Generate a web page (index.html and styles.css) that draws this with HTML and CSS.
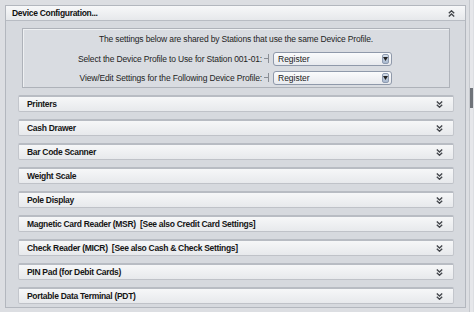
FILE: index.html
```html
<!DOCTYPE html>
<html>
<head>
<meta charset="utf-8">
<link rel="stylesheet" href="styles.css">
</head>
<body>
<div class="page">
  <div class="panel">
    <div class="panel-head">
      <span class="head-title">Device Configuration...</span>
      <svg class="chev" width="7" height="7" viewBox="0 0 7 7"><polyline points="0.8,3.3 3.5,0.8 6.2,3.3" /><polyline points="0.8,6.5 3.5,4 6.2,6.5" /></svg>
    </div>
    <div class="panel-body">
      <div class="info">
        <div class="info-line">The settings below are shared by Stations that use the same Device Profile.</div>
        <div class="info-row">
          <span class="lbl">Select the Device Profile to Use for Station 001-01:</span>
          <span class="tick"></span>
          <div class="select"><span>Register</span><span class="arrow"><svg width="5" height="4" viewBox="0 0 5 4"><polygon points="0,0 5,0 2.5,4" /></svg></span></div>
        </div>
        <div class="info-row">
          <span class="lbl">View/Edit Settings for the Following Device Profile:</span>
          <span class="tick"></span>
          <div class="select"><span>Register</span><span class="arrow"><svg width="5" height="4" viewBox="0 0 5 4"><polygon points="0,0 5,0 2.5,4" /></svg></span></div>
        </div>
      </div>
      <div class="sec"><span>Printers</span><svg class="chev" width="7" height="7" viewBox="0 0 7 7"><polyline points="0.8,0.5 3.5,3 6.2,0.5" /><polyline points="0.8,3.7 3.5,6.2 6.2,3.7" /></svg></div>
      <div class="sec"><span>Cash Drawer</span><svg class="chev" width="7" height="7" viewBox="0 0 7 7"><polyline points="0.8,0.5 3.5,3 6.2,0.5" /><polyline points="0.8,3.7 3.5,6.2 6.2,3.7" /></svg></div>
      <div class="sec"><span>Bar Code Scanner</span><svg class="chev" width="7" height="7" viewBox="0 0 7 7"><polyline points="0.8,0.5 3.5,3 6.2,0.5" /><polyline points="0.8,3.7 3.5,6.2 6.2,3.7" /></svg></div>
      <div class="sec"><span>Weight Scale</span><svg class="chev" width="7" height="7" viewBox="0 0 7 7"><polyline points="0.8,0.5 3.5,3 6.2,0.5" /><polyline points="0.8,3.7 3.5,6.2 6.2,3.7" /></svg></div>
      <div class="sec"><span>Pole Display</span><svg class="chev" width="7" height="7" viewBox="0 0 7 7"><polyline points="0.8,0.5 3.5,3 6.2,0.5" /><polyline points="0.8,3.7 3.5,6.2 6.2,3.7" /></svg></div>
      <div class="sec"><span>Magnetic Card Reader (MSR)&nbsp; [See also Credit Card Settings]</span><svg class="chev" width="7" height="7" viewBox="0 0 7 7"><polyline points="0.8,0.5 3.5,3 6.2,0.5" /><polyline points="0.8,3.7 3.5,6.2 6.2,3.7" /></svg></div>
      <div class="sec"><span>Check Reader (MICR)&nbsp; [See also Cash &amp; Check Settings]</span><svg class="chev" width="7" height="7" viewBox="0 0 7 7"><polyline points="0.8,0.5 3.5,3 6.2,0.5" /><polyline points="0.8,3.7 3.5,6.2 6.2,3.7" /></svg></div>
      <div class="sec"><span>PIN Pad (for Debit Cards)</span><svg class="chev" width="7" height="7" viewBox="0 0 7 7"><polyline points="0.8,0.5 3.5,3 6.2,0.5" /><polyline points="0.8,3.7 3.5,6.2 6.2,3.7" /></svg></div>
      <div class="sec"><span>Portable Data Terminal (PDT)</span><svg class="chev" width="7" height="7" viewBox="0 0 7 7"><polyline points="0.8,0.5 3.5,3 6.2,0.5" /><polyline points="0.8,3.7 3.5,6.2 6.2,3.7" /></svg></div>
    </div>
  </div>
  <div class="scroll"><div class="thumb"></div></div>
</div>
</body>
</html>
```

FILE: styles.css
```css
html, body {
  margin: 0;
  padding: 0;
  background: #dcdee2;
  font-family: "Liberation Sans", Arial, sans-serif;
  color: #222;
}
.page {
  display: flex;
  align-items: flex-start;
  padding: 5px 0 0 5px;
  height: 307px;
}
.panel {
  width: 459px;
  height: 301px;
  border: 1px solid #b3b7be;
  background: #d6d9de;
}
.panel-head {
  height: 14px;
  display: flex;
  align-items: center;
  justify-content: space-between;
  padding: 0 10px 0 6px;
  background: linear-gradient(#f7f8f9, #e6e8eb);
  border-bottom: 1px solid #b8bcc3;
}
.head-title {
  font-size: 8.5px;
  letter-spacing: -0.3px;
  font-weight: bold;
  color: #111;
}
.chev {
  display: block;
}
.chev polyline {
  fill: none;
  stroke: #44474c;
  stroke-width: 1.4;
}
.panel-body {
  padding: 7px 11px 4px 12px;
  display: flex;
  flex-direction: column;
  gap: 7px;
}
.info {
  margin: 0 4px;
  border: 1px solid #aeb2b9;
  box-shadow: inset 1px 1px 0 #eef0f2;
  background: #d9dce1;
  height: 57px;
  padding-top: 1px;
  font-size: 8.5px;
  letter-spacing: -0.15px;
  color: #1e1e1e;
}
.info-line {
  text-align: center;
  height: 19px;
  line-height: 19px;
}
.info-row {
  display: grid;
  grid-template-columns: 1fr 9px 119px;
  align-items: center;
  column-gap: 1px;
  height: 19px;
  padding-right: 57px;
}
.lbl {
  text-align: right;
  white-space: nowrap;
}
.tick {
  position: relative;
  height: 11px;
  margin-left: 1px;
}
.tick::before {
  content: "";
  position: absolute;
  left: 0;
  top: 5px;
  width: 4px;
  border-top: 1px solid #8a8e95;
}
.tick::after {
  content: "";
  position: absolute;
  left: 4px;
  top: 1px;
  height: 9px;
  border-left: 1px solid #8a8e95;
}
.select {
  height: 12px;
  display: flex;
  align-items: center;
  justify-content: space-between;
  border: 1px solid #8f99aa;
  border-radius: 3px;
  background: linear-gradient(#fafbfc, #e8eaee);
  padding: 0 2px 0 4px;
  font-size: 8.5px;
  letter-spacing: 0;
  color: #1a1a1a;
}
.arrow {
  width: 7px;
  height: 10px;
  display: flex;
  align-items: center;
  justify-content: center;
  border-radius: 2px;
  background: linear-gradient(#d5deea, #a9b9cf);
  border: 1px solid #8e9bb0;
  box-sizing: border-box;
}
.arrow polygon {
  fill: #222;
}
.sec {
  height: 14px;
  display: flex;
  align-items: center;
  justify-content: space-between;
  padding: 0 10px 0 8px;
  border: 1px solid #c3c6cc;
  border-top: 2px solid #b8bcc3;
  border-bottom-color: #bfc2c8;
  border-radius: 2px;
  background: linear-gradient(#f6f7f8, #e7e9ec);
  font-size: 8.5px;
  letter-spacing: -0.3px;
  font-weight: bold;
  color: #151515;
}
.scroll {
  margin-left: 3px;
  margin-top: -5px;
  width: 3px;
  height: 312px;
  background: #e6e7ea;
  border-left: 1px solid #c6c9ce;
  display: flex;
  flex-direction: column;
}
.thumb {
  margin-top: 88px;
  height: 20px;
  background: #6f7379;
}
```
